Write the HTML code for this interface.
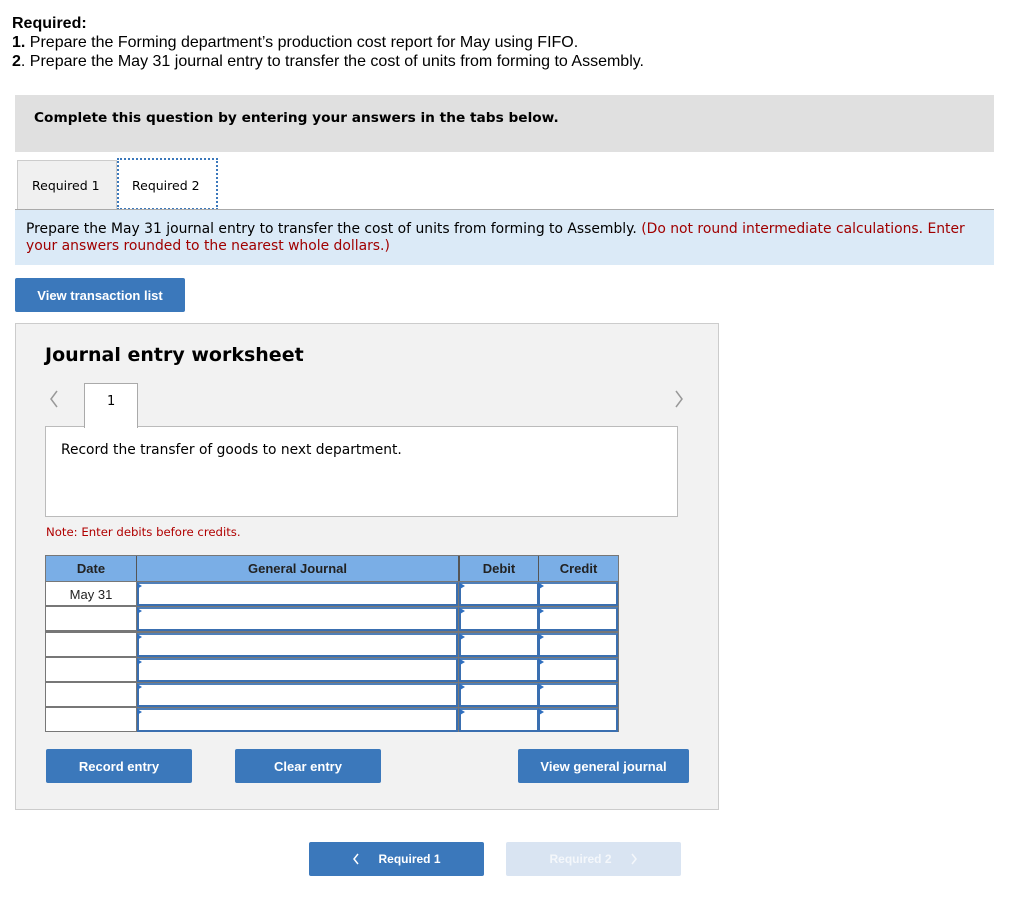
<!DOCTYPE html>
<html><head><meta charset="utf-8"><style>
*{box-sizing:border-box;margin:0;padding:0}
body{width:1024px;height:918px;background:#fff;position:relative;font-family:"Liberation Sans",sans-serif;color:#000;overflow:hidden}
.a{position:absolute}
.v{font-family:"DejaVu Sans","Liberation Sans",sans-serif}
.btn{position:absolute;background:#3b78bb;color:#fff;font-weight:bold;font-size:13px;display:flex;align-items:center;justify-content:center;border-radius:2px}
.cell{position:absolute;background:#fff}
.inp{position:absolute;background:#fff;border:2px solid #3a6fb0;border-top-color:#4f7fb8}
.tri{position:absolute;width:0;height:0;border-top:3px solid transparent;border-bottom:3px solid transparent;border-left:5px solid #2f6fbf}
</style></head><body>
<div class="a" style="left:12px;top:14px;font-size:16px;line-height:19px">
<div style="font-weight:bold">Required:</div>
<div><b>1.</b> Prepare the Forming department’s production cost report for May using FIFO.</div>
<div><b>2</b>. Prepare the May 31 journal entry to transfer the cost of units from forming to Assembly.</div>
</div>
<div class="a" style="left:15px;top:95px;width:979px;height:57px;background:#e0e0e0"></div>
<div class="a v" style="left:34px;top:110px;font-size:13.7px;font-weight:bold">Complete this question by entering your answers in the tabs below.</div>

<div class="a" style="left:17px;top:160px;width:100px;height:50px;background:#f0f0f0;border:1px solid #ccc;border-bottom:none"></div>
<div class="a v" style="left:32px;top:178px;font-size:12.5px">Required 1</div>
<div class="a" style="left:117px;top:158px;width:101px;height:52px;background:#fff;border:2px dotted #3b78bb"></div>
<div class="a v" style="left:132px;top:178px;font-size:12.5px">Required 2</div>
<div class="a" style="left:15px;top:209px;width:979px;height:56px;background:#dbeaf7;border-top:1px solid #aaa"></div>
<div class="a v" style="left:26px;top:221px;width:955px;font-size:13.9px;line-height:17px">Prepare the May 31 journal entry to transfer the cost of units from forming to Assembly. <span style="color:#a00000">(Do not round intermediate calculations. Enter your answers rounded to the nearest whole dollars.)</span></div>

<div class="btn" style="left:15px;top:278px;width:170px;height:34px">View transaction list</div>

<div class="a" style="left:15px;top:323px;width:704px;height:487px;background:#f2f2f2;border:1px solid #ccc"></div>
<div class="a v" style="left:45px;top:344px;font-size:19px;font-weight:bold">Journal entry worksheet</div>
<svg class="a" style="left:48px;top:390px" width="12" height="18"><path d="M9 1 L3 9 L9 17" fill="none" stroke="#999" stroke-width="1.5"/></svg>
<svg class="a" style="left:673px;top:390px" width="12" height="18"><path d="M3 1 L9 9 L3 17" fill="none" stroke="#999" stroke-width="1.5"/></svg>
<div class="a" style="left:45px;top:426px;width:633px;height:91px;background:#fff;border:1px solid #bbb"></div>
<div class="a" style="left:84px;top:383px;width:54px;height:45px;background:#fff;border:1px solid #aaa;border-bottom:none"></div>
<div class="a v" style="left:107px;top:394px;font-size:13px">1</div>
<div class="a v" style="left:61px;top:442px;font-size:13.8px">Record the transfer of goods to next department.</div>
<div class="a v" style="left:46px;top:525px;font-size:11.7px;color:#b00000">Note: Enter debits before credits.</div>

<div class="a" style="left:45px;top:555px;width:574px;height:177px;background:#777"></div>
<div class="a" style="left:46px;top:556px;width:572px;height:25px;background:#7aaee6"></div>
<div class="a" style="left:136px;top:556px;width:1px;height:25px;background:#555"></div>
<div class="a" style="left:458px;top:556px;width:2px;height:25px;background:#555"></div>
<div class="a" style="left:538px;top:556px;width:1px;height:25px;background:#555"></div>
<div class="a" style="left:46px;top:561px;width:90px;text-align:center;font-size:13px;font-weight:bold;color:#222">Date</div>
<div class="a" style="left:137px;top:561px;width:321px;text-align:center;font-size:13px;font-weight:bold;color:#222">General Journal</div>
<div class="a" style="left:460px;top:561px;width:78px;text-align:center;font-size:13px;font-weight:bold;color:#222">Debit</div>
<div class="a" style="left:539px;top:561px;width:79px;text-align:center;font-size:13px;font-weight:bold;color:#222">Credit</div>

<div id="rows"></div>
<script>
var h='',ys=[582,607,633,658,683,708];
ys.forEach(function(y,i){
h+='<div class="cell" style="left:46px;top:'+y+'px;width:90px;height:23px"></div>';
if(i==0)h+='<div class="a" style="left:46px;top:'+(y+5)+'px;width:90px;text-align:center;font-size:13px;color:#222">May 31</div>';
h+='<div class="inp" style="left:137px;top:'+y+'px;width:321px;height:24px"></div><div class="tri" style="left:137px;top:'+(y+1)+'px"></div>';
h+='<div class="inp" style="left:459px;top:'+y+'px;width:80px;height:24px"></div><div class="tri" style="left:460px;top:'+(y+1)+'px"></div>';
h+='<div class="inp" style="left:538px;top:'+y+'px;width:80px;height:24px"></div><div class="tri" style="left:539px;top:'+(y+1)+'px"></div>';
});
document.getElementById('rows').innerHTML=h;
</script>

<div class="btn" style="left:46px;top:749px;width:146px;height:34px">Record entry</div>
<div class="btn" style="left:235px;top:749px;width:146px;height:34px">Clear entry</div>
<div class="btn" style="left:518px;top:749px;width:171px;height:34px">View general journal</div>

<div class="btn" style="left:309px;top:842px;width:175px;height:34px;font-size:12px"><svg width="8" height="12" style="margin-right:18px"><path d="M6 1 L2 6 L6 11" fill="none" stroke="#fff" stroke-width="1.5"/></svg>Required 1</div>
<div class="btn" style="left:506px;top:842px;width:175px;height:34px;font-size:12px;background:#d9e4f2;color:#f4f7fb">Required 2<svg width="8" height="12" style="margin-left:18px"><path d="M2 1 L6 6 L2 11" fill="none" stroke="#f4f7fb" stroke-width="1.5"/></svg></div>
</body></html>
